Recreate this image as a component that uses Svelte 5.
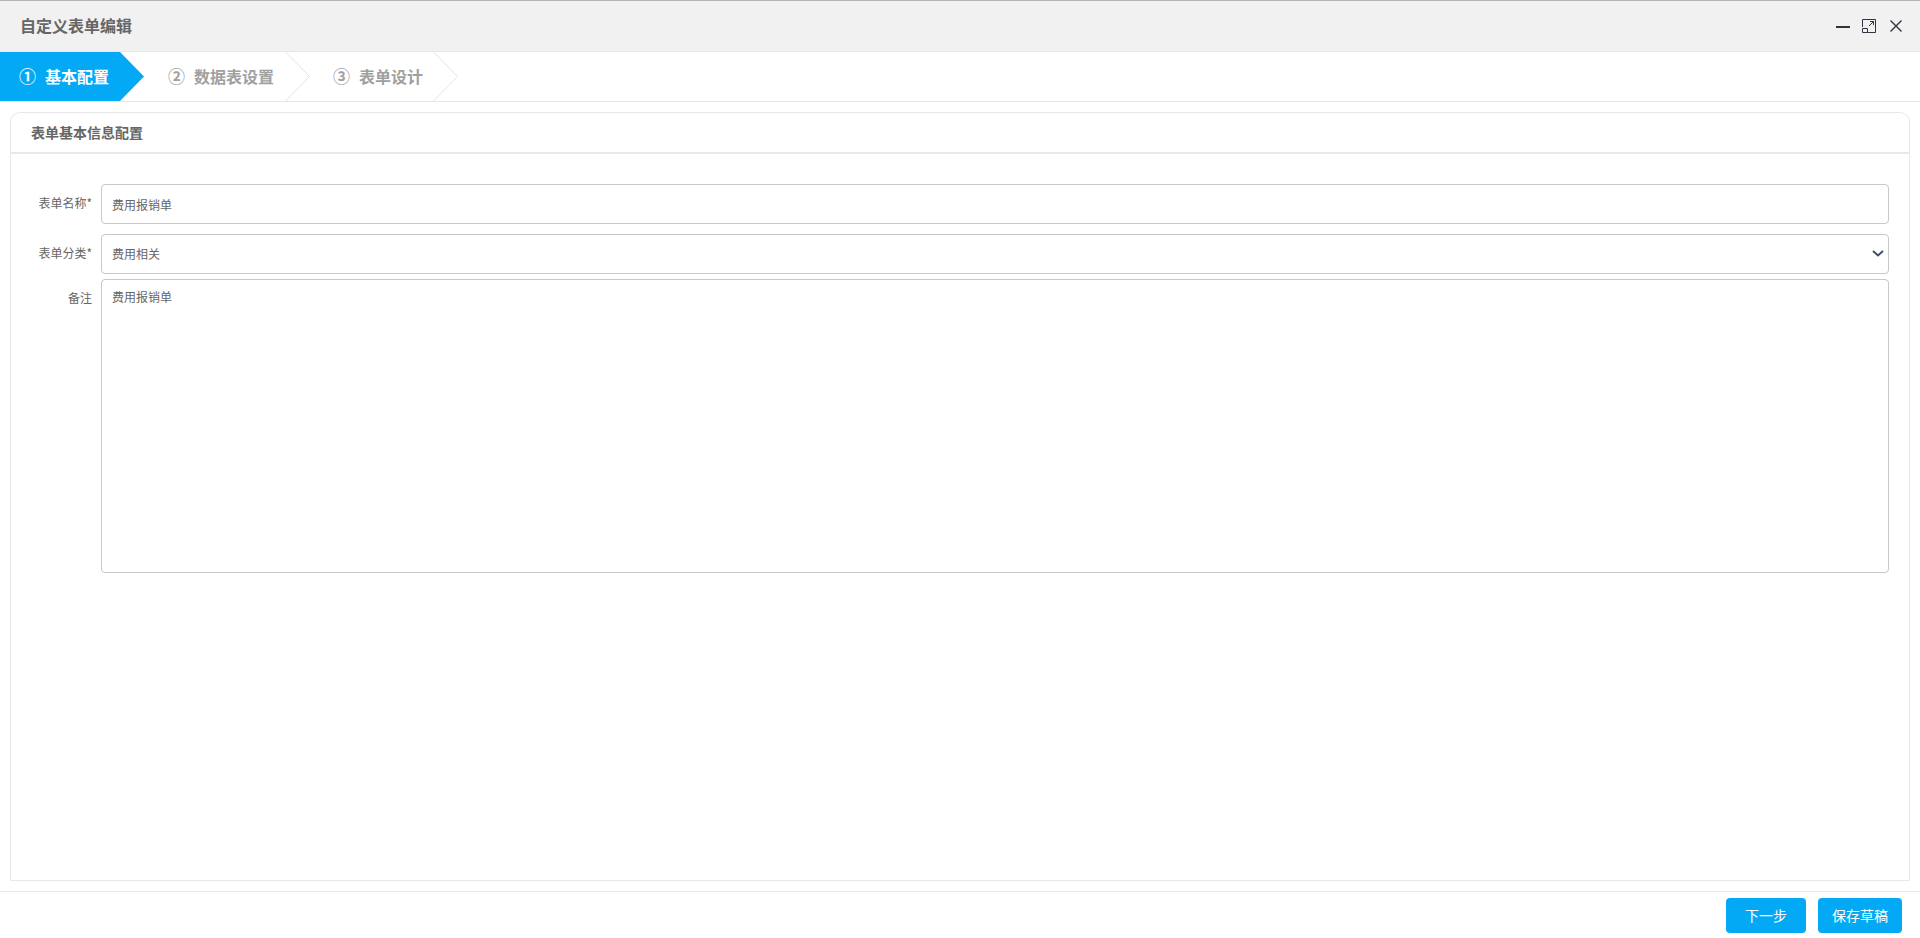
<script>
  const steps = [
    { num: '①', label: '基本配置', active: true },
    { num: '②', label: '数据表设置', active: false },
    { num: '③', label: '表单设计', active: false }
  ];
</script>

<div class="window">
  <header class="titlebar">
    <h1>自定义表单编辑</h1>
    <div class="controls">
      <svg width="14" height="14" viewBox="0 0 14 14" aria-label="最小化"><path d="M0 8h14" stroke="#2f3440" stroke-width="2" fill="none"/></svg>
      <svg width="14" height="14" viewBox="0 0 14 14" aria-label="最大化"><path d="M0.5 8V.5h13v13H5.5M8 2.5h3.5V6M11.5 2.5 7 7M.5 9.5h5v4h-5z" stroke="#2f3440" stroke-width="1" fill="none"/></svg>
      <svg class="close" width="12" height="12" viewBox="0 0 12 12" aria-label="关闭"><path d="M.5.5l11 11M11.5.5l-11 11" stroke="#2f3440" stroke-width="1.4" fill="none"/></svg>
    </div>
  </header>

  <nav class="steps">
    {#each steps as s}
      <div class="step" class:active={s.active}>
        <span class="num">{s.num}</span>
        <span class="label">{s.label}</span>
      </div>
      {#if !s.active}
        <svg class="sep" width="25" height="49" viewBox="0 0 25 49"><path d="M.5 0l24 24.5L.5 49" stroke="#e4e4e4" fill="none"/></svg>
      {/if}
    {/each}
  </nav>

  <section class="card">
    <h2>表单基本信息配置</h2>
    <form class="form">
      <div class="row">
        <label for="f-name">表单名称*</label>
        <input id="f-name" value="费用报销单" />
      </div>
      <div class="row">
        <label for="f-cat">表单分类*</label>
        <div class="select" id="f-cat">
          <span>费用相关</span>
          <svg width="12" height="7" viewBox="0 0 12 7"><path d="M1 1l5 4.5L11 1" stroke="#3a4a60" stroke-width="1.8" fill="none"/></svg>
        </div>
      </div>
      <div class="row tight">
        <label for="f-note">备注</label>
        <textarea id="f-note">费用报销单</textarea>
      </div>
    </form>
  </section>

  <footer class="footer">
    <button type="button" class="next">下一步</button>
    <button type="button" class="draft">保存草稿</button>
  </footer>
</div>

<style>
  :global(body) {
    margin: 0;
    background: #fff;
  }
  .window {
    height: 938px;
    display: flex;
    flex-direction: column;
    font-family: "Noto Sans CJK SC", "Liberation Sans", sans-serif;
    color: #666;
    box-sizing: border-box;
    overflow: hidden;
  }
  .titlebar {
    height: 52px;
    flex: none;
    box-sizing: border-box;
    background: #f1f1f1;
    border-top: 1px solid #b4b4b4;
    border-bottom: 1px solid #e8e8e8;
    display: flex;
    align-items: center;
    justify-content: space-between;
    padding: 0 18px 0 20px;
  }
  h1 {
    margin: 0 0 2px;
    font-size: 16px;
    font-weight: 700;
    color: #666;
  }
  .controls {
    display: flex;
    align-items: center;
    gap: 12px;
  }
  .close {
    margin-left: 2px;
  }
  .steps {
    height: 50px;
    flex: none;
    box-sizing: border-box;
    border-bottom: 1px solid #e6e6e6;
    display: flex;
    align-items: stretch;
  }
  .step {
    display: flex;
    align-items: center;
    gap: 9px;
    padding: 0 11px 2px 25px;
    font-size: 16px;
    font-weight: 700;
    color: #a0a0a0;
  }
  .step:last-of-type {
    padding: 0 10px 2px 24px;
  }
  .step.active {
    width: 144px;
    box-sizing: border-box;
    padding: 0 0 2px 20px;
    background: #03a9f4;
    color: #fff;
    clip-path: polygon(0 0, 120px 0, 144px 50%, 120px 100%, 0 100%);
  }
  .num {
    font-size: 17px;
    font-weight: 700;
    margin-left: -1px;
  }
  .sep {
    flex: none;
  }
  .card {
    margin: 10px 10px 0;
    height: 769px;
    flex: none;
    box-sizing: border-box;
    border: 1px solid #e8e8e8;
    border-radius: 10px 10px 0 0;
  }
  h2 {
    margin: 0;
    height: 41px;
    box-sizing: border-box;
    border-bottom: 2px solid #e8e8e8;
    padding-left: 20px;
    line-height: 39px;
    font-size: 14px;
    font-weight: 700;
    color: #666;
  }
  .form {
    padding: 30px 20px 0 0;
  }
  .row {
    display: flex;
    align-items: flex-start;
    margin-bottom: 10px;
  }
  .row.tight {
    margin-top: -5px;
  }
  label {
    width: 90px;
    flex: none;
    padding-right: 9px;
    box-sizing: border-box;
    text-align: right;
    font-size: 12px;
    line-height: 38px;
    color: #666;
  }
  input,
  .select,
  textarea {
    flex: 1;
    min-width: 0;
    box-sizing: border-box;
    height: 40px;
    padding: 0 10px;
    border: 1px solid #c8c8c8;
    border-radius: 4px;
    background: #fff;
    font: inherit;
    font-size: 12px;
    color: #666;
    outline: none;
  }
  .select {
    display: flex;
    align-items: center;
    justify-content: space-between;
    padding: 0 4px 1px 10px;
  }
  textarea {
    height: 294px;
    padding: 8px 10px;
    resize: none;
    display: block;
    line-height: 18px;
  }
  .footer {
    flex: none;
    margin-top: 10px;
    height: 47px;
    box-sizing: border-box;
    border-top: 1px solid #e8e8e8;
    display: flex;
    justify-content: flex-end;
    gap: 12px;
    padding: 6px 18px 0 0;
  }
  button {
    height: 35px;
    border: none;
    border-radius: 4px;
    background: #03a9f4;
    color: #fff;
    font: inherit;
    font-size: 14px;
    padding: 0 0 2px;
  }
  .next {
    width: 80px;
  }
  .draft {
    width: 84px;
  }
</style>
